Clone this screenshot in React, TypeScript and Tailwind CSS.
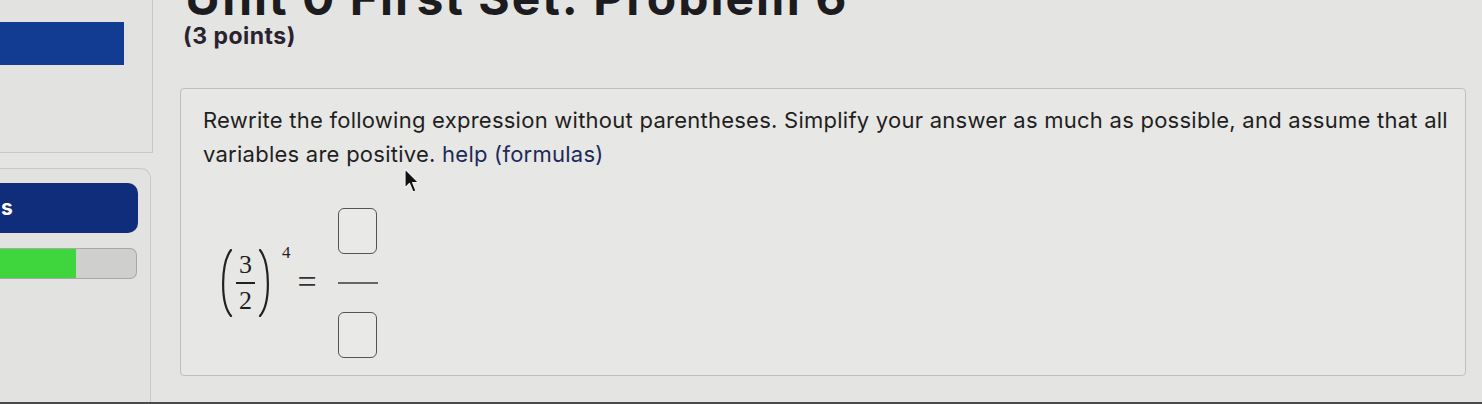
import React from 'react';

const sans = { fontFamily: 'Inter, "Liberation Sans", Arial, sans-serif' };

const Paren: React.FC<{ flip?: boolean }> = ({ flip }) => (
  <svg width="15" height="68" viewBox="0 0 15 68" className={flip ? '-scale-x-100' : ''}>
    <path d="M13 1 C3 14 2 54 13 67" fill="none" stroke="#222" strokeWidth="2.2" strokeLinecap="round" />
  </svg>
);

const AnswerBox: React.FC = () => (
  <div className="w-[39px] h-[46px] rounded-[6px] border-[1.5px] border-[#555] bg-[#e9e9e7]"></div>
);

const App: React.FC = () => {
  return (
    <div
      className="relative w-[1482px] h-[404px] overflow-hidden bg-[#e4e4e2] text-[#1f1f22] flex border-b-2 border-[#4a4a4a]"
      style={sans}
    >
      {/* Sidebar */}
      <aside className="w-[153px] shrink-0 flex flex-col">
        <div className="h-[153px] bg-[#e2e2e0] border-r border-b border-[#c8c8c6] pt-[22px]">
          <div className="w-[124px] h-[43px] bg-[#123b92]"></div>
        </div>
        <div className="mt-[15px] w-[151px] flex-1 bg-[#e2e2e0] border-t border-r border-[#c8c8c6] rounded-tr-[10px] pt-[14px]">
          <div className="w-[138px] h-[50px] bg-[#102d7c] rounded-r-[10px] flex items-center">
            <span className="text-white font-bold text-[21px] leading-none -mt-[2px] pl-[1px]">s</span>
          </div>
          <div className="mt-[15px] w-[137px] h-[31px] bg-[#cfcfcd] border border-[#a8a8a6] border-l-0 rounded-r-[7px] overflow-hidden flex">
            <div className="w-[76px] h-full bg-[#3ed63c]"></div>
          </div>
        </div>
      </aside>

      {/* Main */}
      <main className="flex-1 flex flex-col pl-[27px] pr-[17px]">
        <h1 className="text-[48px] leading-[42px] tracking-[2px] font-bold -mt-[23px] pl-[5px] whitespace-nowrap text-[#1c1c20]">
          Unit 0 First Set: Problem 6
        </h1>
        <div className="mt-[3px] text-[23px] leading-[28px] tracking-[0.5px] font-bold pl-[3px] text-[#2b2230]">(3 points)</div>

        <section className="mt-[38px] h-[288px] bg-[#e7e7e5] border border-[#bfbfbd] rounded-[4px] pl-[22px] pt-[14px]">
          <p className="text-[22px] leading-[34px] tracking-[0.25px] w-[1262px]">
            Rewrite the following expression without parentheses. Simplify your answer as much as possible, and assume that all variables are positive.{' '}
            <span className="text-[#1d2a58]">help (formulas)</span>
          </p>

          <div
            className="mt-[37px] ml-[15px] flex items-center"
            style={{ fontFamily: '"Liberation Serif", "Times New Roman", serif' }}
          >
            <div className="flex items-start">
              <div className="flex items-center">
                <Paren />
                <div className="mx-[3px] w-[19px] flex flex-col items-center">
                  <span className="text-[26px] leading-[26px]">3</span>
                  <div className="w-[19px] h-[1.5px] bg-[#222] my-[4px]"></div>
                  <span className="text-[26px] leading-[26px]">2</span>
                </div>
                <Paren flip />
              </div>
              <span className="-mt-[5px] ml-[9px] text-[17px] leading-none">4</span>
            </div>
            <span className="ml-[7px] text-[34px] leading-none -mt-[2px] text-[#333]">=</span>
            <div className="ml-[21px] flex flex-col items-center">
              <AnswerBox />
              <div className="w-[40px] h-[1.5px] bg-[#666] my-[28px]"></div>
              <AnswerBox />
            </div>
          </div>
        </section>
      </main>

      {/* Mouse pointer */}
      <svg className="absolute left-[404px] top-[168px]" width="16" height="26" viewBox="0 0 16 26">
        <path d="M1 1 L1 20 L5.5 15.5 L9 24 L12 22.8 L8.6 14.6 L14.5 14.6 Z" fill="#111" stroke="#eee" strokeWidth="1.2" strokeLinejoin="round" />
      </svg>
    </div>
  );
};

export default App;
